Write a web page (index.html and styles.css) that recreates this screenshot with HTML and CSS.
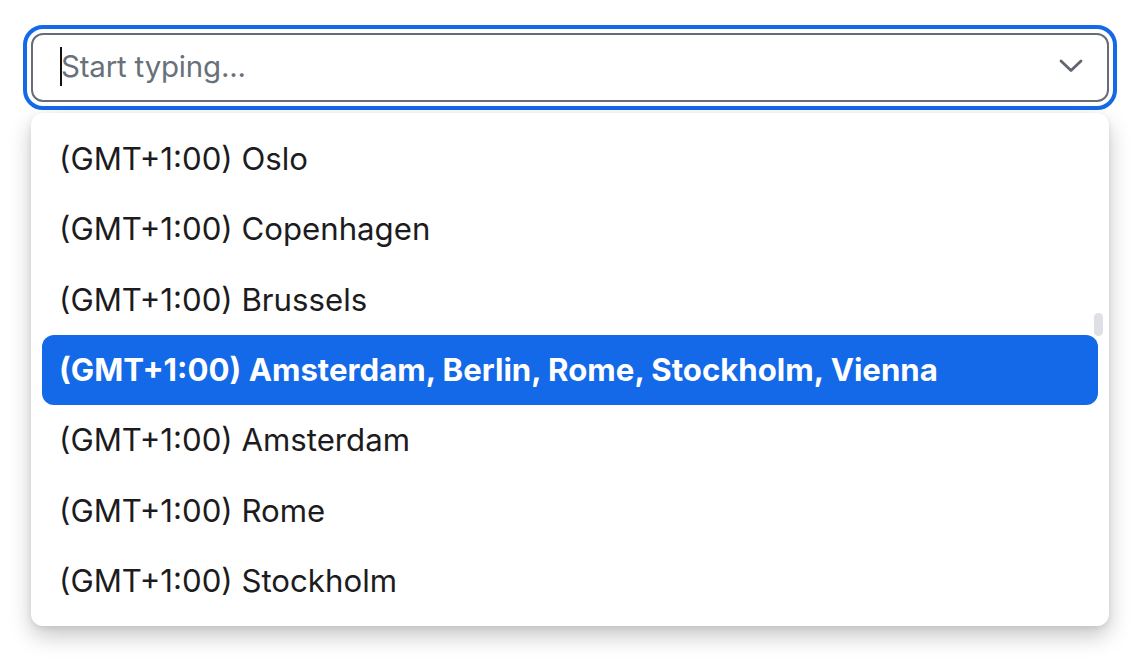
FILE: index.html
```html
<!DOCTYPE html>
<html lang="en">
<head>
<meta charset="utf-8">
<title>Timezone select</title>
<link rel="stylesheet" href="styles.css">
</head>
<body>
<div class="combo">
  <div class="field">
    <span class="caret"></span>
    <span class="placeholder">Start typing...</span>
    <svg class="chevron" width="24" height="14" viewBox="0 0 24 14" aria-hidden="true">
      <path d="M2 2 L12 11.5 L22 2" fill="none" stroke="#5f6670" stroke-width="2.8" stroke-linecap="round" stroke-linejoin="round"/>
    </svg>
  </div>
  <div class="menu">
    <ul class="options">
      <li class="option">(GMT+1:00) Oslo</li>
      <li class="option">(GMT+1:00) Copenhagen</li>
      <li class="option">(GMT+1:00) Brussels</li>
      <li class="option active">(GMT+1:00) Amsterdam, Berlin, Rome, Stockholm, Vienna</li>
      <li class="option">(GMT+1:00) Amsterdam</li>
      <li class="option">(GMT+1:00) Rome</li>
      <li class="option">(GMT+1:00) Stockholm</li>
    </ul>
    <div class="thumb"></div>
  </div>
</div>
</body>
</html>
```
FILE: styles.css
```css
html, body {
  margin: 0;
  padding: 0;
  background: #ffffff;
}

body {
  font-family: Inter, "Noto Sans", "Liberation Sans", sans-serif;
  color: #1c1c1e;
  min-height: 662px;
  padding-top: 33px;
  box-sizing: border-box;
}

.combo {
  margin: 0 33px 0 31px;
}

.field {
  display: flex;
  align-items: center;
  height: 69px;
  box-sizing: border-box;
  border: 2px solid #676d76;
  border-radius: 12px;
  outline: 4px solid #1469e8;
  outline-offset: 4px;
  padding: 0 24px 3px 27px;
  background: #ffffff;
}

.caret {
  width: 2px;
  height: 39px;
  background: #111111;
  margin-right: -1px;
}

.placeholder {
  flex: 1;
  font-size: 29.5px;
  color: #687079;
  letter-spacing: -0.2px;
}

.chevron {
  display: block;
}

.menu {
  position: relative;
  margin-top: 11px;
  background: #ffffff;
  border-radius: 12px;
  box-shadow: 0 10px 22px rgba(0, 0, 0, 0.22), 0 2px 6px rgba(0, 0, 0, 0.08);
  padding: 11px 11px 10px 11px;
}

.options {
  list-style: none;
  margin: 0;
  padding: 0;
}

.option {
  height: 70.33px;
  display: flex;
  align-items: center;
  padding-left: 17px;
  font-size: 31.2px;
  border-radius: 12px;
  white-space: nowrap;
}

.option.active {
  background: #1369e8;
  color: #ffffff;
  font-weight: 700;
}

.thumb {
  position: absolute;
  top: 200px;
  right: 6px;
  width: 9px;
  height: 23px;
  border-radius: 5px;
  background: #dde0e5;
}
```
